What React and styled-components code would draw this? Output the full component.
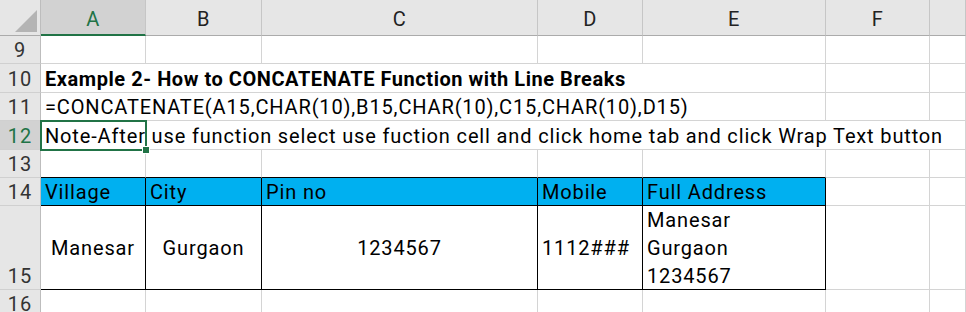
import React from 'react';
import styled, { createGlobalStyle } from 'styled-components';

const Global = createGlobalStyle`
  body {
    margin: 0;
    background: #fff;
    font-family: Roboto, 'Liberation Sans', sans-serif;
  }
`;

const GRID = '#d4d4d4';
const INK = '#000';

const Sheet = styled.div`
  position: relative;
  display: grid;
  grid-template-columns: 41px 105px 116px 276px 105px 183px 104px 1fr;
  grid-template-rows: 36px 28px 29px 28px 29px 28px 28px 84px 28px;
  width: 966px;
  height: 312px;
  overflow: hidden;
`;

const Corner = styled.div`
  position: relative;
  background: #e6e6e6;
  border-right: 1px solid #bdbdbd;
  border-bottom: 1px solid #ababab;
  box-sizing: border-box;
  &::after {
    content: '';
    position: absolute;
    right: 3px;
    bottom: 3px;
    width: 0;
    height: 0;
    border-left: 22px solid transparent;
    border-bottom: 22px solid #b4b4b4;
  }
`;

const ColHead = styled.div`
  display: flex;
  align-items: center;
  justify-content: center;
  padding-top: 3px;
  box-sizing: border-box;
  background: ${(p) => (p.$active ? '#d2d2d2' : '#e6e6e6')};
  color: ${(p) => (p.$active ? '#217346' : '#222')};
  border-right: 1px solid #c6c6c6;
  border-bottom: ${(p) => (p.$active ? '2px solid #217346' : '1px solid #ababab')};
  font-size: 20px;
  letter-spacing: 0.5px;
`;

const RowHead = styled.div`
  display: flex;
  align-items: flex-end;
  justify-content: center;
  box-sizing: border-box;
  background: ${(p) => (p.$active ? '#d2d2d2' : '#e6e6e6')};
  color: ${(p) => (p.$active ? '#217346' : '#333')};
  border-right: 1px solid #bdbdbd;
  border-bottom: 1px solid #d0d0d0;
  font-size: 20px;
  line-height: 26px;
  letter-spacing: 1px;
`;

const Cell = styled.div`
  grid-column: ${(p) => (p.$span ? `span ${p.$span}` : 'auto')};
  display: flex;
  flex-direction: column;
  justify-content: ${(p) => p.$valign || 'flex-end'};
  align-items: ${(p) => p.$align || 'flex-start'};
  padding: 0 4px;
  box-sizing: border-box;
  background: ${(p) => p.$bg || '#fff'};
  border-right: 1px solid ${(p) => p.$br || GRID};
  border-bottom: 1px solid ${(p) => p.$bb || GRID};
  font-size: 20px;
  font-weight: ${(p) => (p.$bold ? 700 : 400)};
  line-height: 26px;
  letter-spacing: ${(p) => (p.$bold ? '0.55px' : '0.85px')};
  color: #000;
  white-space: nowrap;
  overflow: visible;
`;

const Line = styled.div`
  line-height: 28px;
`;

const Selection = styled.div`
  position: absolute;
  left: 40px;
  top: 120px;
  width: 107px;
  height: 31px;
  box-sizing: border-box;
  border: 2px solid #217346;
  z-index: 2;
  &::after {
    content: '';
    position: absolute;
    right: -5px;
    bottom: -5px;
    width: 6px;
    height: 6px;
    background: #217346;
    border: 1px solid #fff;
  }
`;

const cols = ['A', 'B', 'C', 'D', 'E', 'F', ''];

function Blank({ n, bb }) {
  return Array.from({ length: n }, (_, i) => <Cell key={i} $bb={bb} />);
}

export default function App() {
  return (
    <>
      <Global />
      <Sheet>
        <Corner />
        {cols.map((c, i) => (
          <ColHead key={i} $active={c === 'A'}>
            {c}
          </ColHead>
        ))}

        <RowHead>9</RowHead>
        <Blank n={7} />

        <RowHead>10</RowHead>
        <Cell $span={5} $bold>
          Example 2- How to CONCATENATE Function with Line Breaks
        </Cell>
        <Blank n={2} />

        <RowHead>11</RowHead>
        <Cell $span={5}>=CONCATENATE(A15,CHAR(10),B15,CHAR(10),C15,CHAR(10),D15)</Cell>
        <Blank n={2} />

        <RowHead $active>12</RowHead>
        <Cell $span={7}>
          Note-After use function select use fuction cell and click home tab and click Wrap Text button
        </Cell>

        <RowHead>13</RowHead>
        <Blank n={5} bb={INK} />
        <Blank n={2} />

        <RowHead>14</RowHead>
        <Cell $bg="#00b0f0" $br={INK} $bb={INK}>Village</Cell>
        <Cell $bg="#00b0f0" $br={INK} $bb={INK}>City</Cell>
        <Cell $bg="#00b0f0" $br={INK} $bb={INK}>Pin no</Cell>
        <Cell $bg="#00b0f0" $br={INK} $bb={INK}>Mobile</Cell>
        <Cell $bg="#00b0f0" $br={INK} $bb={INK}>Full Address</Cell>
        <Blank n={2} />

        <RowHead>15</RowHead>
        <Cell $br={INK} $bb={INK} $align="center" $valign="center">Manesar</Cell>
        <Cell $br={INK} $bb={INK} $align="center" $valign="center">Gurgaon</Cell>
        <Cell $br={INK} $bb={INK} $align="center" $valign="center">1234567</Cell>
        <Cell $br={INK} $bb={INK} $valign="center">1112###</Cell>
        <Cell $br={INK} $bb={INK} $valign="flex-start">
          <Line>Manesar</Line>
          <Line>Gurgaon</Line>
          <Line>1234567</Line>
        </Cell>
        <Blank n={2} />

        <RowHead>16</RowHead>
        <Blank n={7} />

        <Selection />
      </Sheet>
    </>
  );
}
